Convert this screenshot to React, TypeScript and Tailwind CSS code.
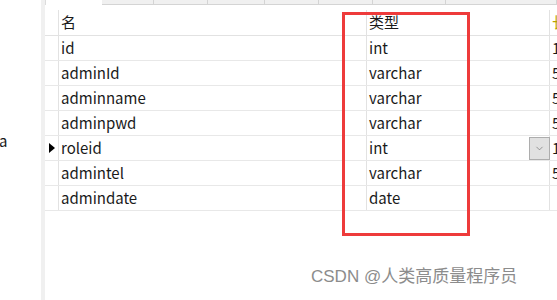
import { ChevronDown } from 'lucide-react';

interface Field {
  name: string;
  type: string;
  len: string;
}

const fields: Field[] = [
  { name: 'id', type: 'int', len: '11' },
  { name: 'adminId', type: 'varchar', len: '50' },
  { name: 'adminname', type: 'varchar', len: '50' },
  { name: 'adminpwd', type: 'varchar', len: '50' },
  { name: 'roleid', type: 'int', len: '11' },
  { name: 'admintel', type: 'varchar', len: '50' },
  { name: 'admindate', type: 'date', len: '' },
];

const tabs = [52, 54, 57, 54, 54, 73, 111];

export default function App() {
  return (
    <div
      className="relative flex h-[300px] w-[557px] overflow-hidden bg-white text-[15px] text-[#1a1a1a]"
      style={{ fontFamily: '"Noto Sans CJK SC", "Noto Sans", sans-serif' }}
    >
      {/* left pane, mostly cut off */}
      <div className="flex w-[41px] shrink-0 flex-col pt-[128px]">
        <span className="-ml-[1px] leading-[25px]">a</span>
      </div>
      <div className="w-[4px] shrink-0 bg-[#f0f0f0]" />

      <div className="flex min-w-0 flex-1 flex-col overflow-hidden">
        {/* tab strip */}
        <div className="flex h-[5px]">
          <div className="w-[57px] shrink-0 border-l border-[#dcdcdc] bg-white" />
          {tabs.map((w, i) => (
            <div
              key={i}
              className="shrink-0 border-b border-r border-[#d4d4d4] bg-[#f0f0f0]"
              style={{ width: w }}
            />
          ))}
        </div>

        {/* grid */}
        <div className="pt-[5px]">
          <div className="flex h-[26px] border-b border-[#e2e2e2]">
            <div className="w-[14px] shrink-0 border-r border-[#e2e2e2]" />
            <div className="flex w-[308px] shrink-0 items-center border-r border-[#e2e2e2] pl-[2px]">名</div>
            <div className="flex w-[183px] shrink-0 items-center border-r border-[#e2e2e2] pl-[2px]">类型</div>
            <div className="flex items-center overflow-hidden whitespace-nowrap pl-[2px] text-[#b8a000]">长度</div>
          </div>
          {fields.map((f) => (
            <div key={f.name} className="flex h-[25px] border-b border-[#e8e8e8]">
              <div className="flex w-[14px] shrink-0 items-center justify-center border-r border-[#e2e2e2]">
                {f.name === 'roleid' && (
                  <span className="h-0 w-0 border-y-[5px] border-l-[6px] border-y-transparent border-l-black" />
                )}
              </div>
              <div className="flex w-[308px] shrink-0 items-center border-r border-[#e2e2e2] pl-[2px]">{f.name}</div>
              <div className="flex w-[183px] shrink-0 items-center justify-between border-r border-[#e2e2e2] pl-[2px]">
                <span>{f.type}</span>
                {f.name === 'roleid' && (
                  <span className="mr-[-1px] flex h-[23px] w-[21px] items-center justify-center border border-[#adadad] bg-[#e1e1e1]">
                    <ChevronDown size={11} strokeWidth={1.2} color="#555" />
                  </span>
                )}
              </div>
              <div className="flex items-center overflow-hidden whitespace-nowrap pl-[2px]">{f.len}</div>
            </div>
          ))}
        </div>
      </div>

      {/* annotation box */}
      <div className="absolute left-[342px] top-[12px] h-[224px] w-[128px] border-[3px] border-[#ee3b3b]" />

      {/* watermark */}
      <div
        className="absolute left-[311px] top-[264px] text-[17px] text-[#8c8c8c]"
        style={{ fontFamily: '"Liberation Sans", "Noto Sans CJK SC", sans-serif' }}
      >
        CSDN @人类高质量程序员
      </div>
    </div>
  );
}
